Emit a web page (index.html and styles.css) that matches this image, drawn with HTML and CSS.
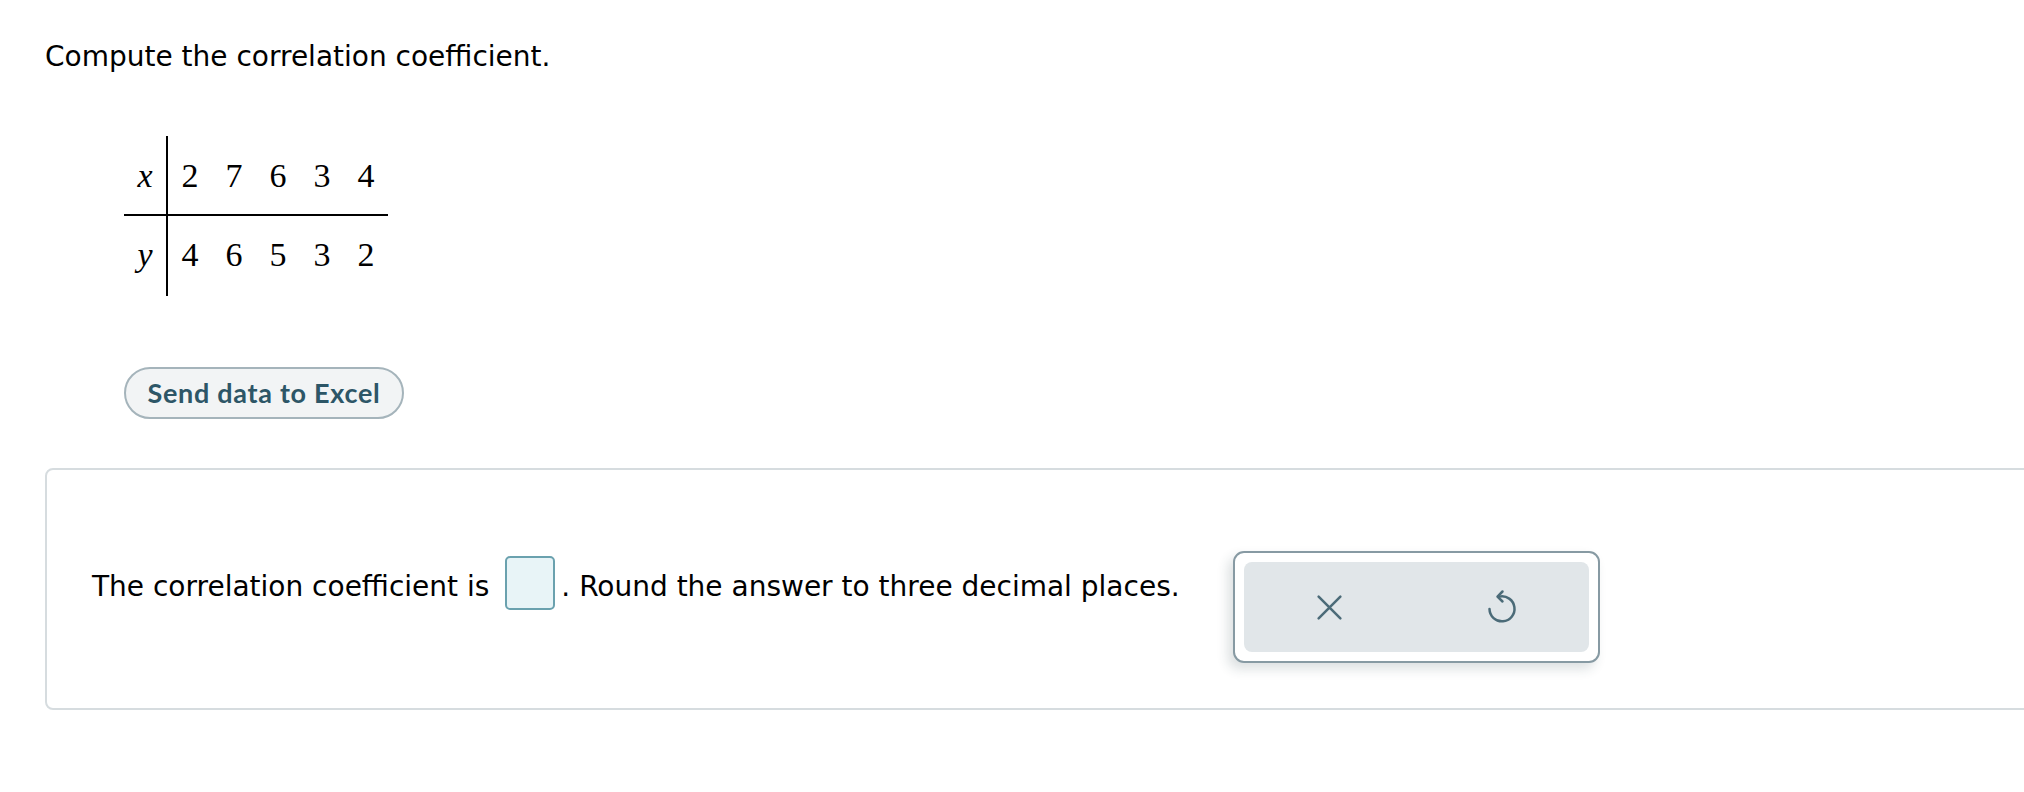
FILE: index.html
```html
<!DOCTYPE html>
<html>
<head>
<meta charset="utf-8">
<title>Correlation coefficient</title>
<link rel="stylesheet" href="styles.css">
</head>
<body>
<div class="page">
  <p class="title">Compute the correlation coefficient.</p>

  <div class="dtable">
    <div class="cell head r1">x</div>
    <div class="cell r1">2</div>
    <div class="cell r1">7</div>
    <div class="cell r1">6</div>
    <div class="cell r1">3</div>
    <div class="cell r1">4</div>
    <div class="cell head r2">y</div>
    <div class="cell r2">4</div>
    <div class="cell r2">6</div>
    <div class="cell r2">5</div>
    <div class="cell r2">3</div>
    <div class="cell r2">2</div>
  </div>

  <button class="excel">Send data to Excel</button>

  <div class="answer">
    <div class="row">
      <div class="question">
        <span class="qtext">The correlation coefficient is</span>
        <span class="input"></span>
        <span class="qtext">. Round the answer to three decimal places.</span>
      </div>
      <div class="tools">
        <div class="tools-inner">
          <div class="tool">
            <svg width="29" height="29" viewBox="0 0 24 24"><path d="M3 3 L21 21 M21 3 L3 21" fill="none" stroke="#4b6b78" stroke-width="2.1" stroke-linecap="round"/></svg>
          </div>
          <div class="tool">
            <svg width="32" height="36" viewBox="0 0 32 36"><path d="M13.5 7.6 A12.5 12.5 0 1 1 3.5 20" fill="none" stroke="#4b6b78" stroke-width="2.5" stroke-linecap="round"/><path d="M16.5 2.5 L11.5 7.6 L16.5 12.5" fill="none" stroke="#4b6b78" stroke-width="2.5" stroke-linecap="round" stroke-linejoin="round"/></svg>
          </div>
        </div>
      </div>
    </div>
  </div>
</div>
</body>
</html>
```

FILE: styles.css
```css
html, body {
  margin: 0;
  padding: 0;
  background: #ffffff;
}
body {
  font-family: "DejaVu Sans", Verdana, sans-serif;
  color: #000000;
}
.page {
  padding-left: 45px;
  overflow: hidden;
  height: 792px;
  box-sizing: border-box;
}
.title {
  margin: 0;
  padding-top: 40px;
  font-size: 28px;
  line-height: 33px;
}
.dtable {
  margin-top: 63px;
  margin-left: 79px;
  display: grid;
  grid-template-columns: repeat(6, 44px);
  grid-template-rows: 80px 80px;
  width: 264px;
  font-family: "Liberation Serif", "Times New Roman", serif;
  font-size: 34px;
  line-height: 38px;
}
.cell {
  box-sizing: border-box;
  text-align: center;
}
.cell.head {
  font-style: italic;
  border-right: 2px solid #000;
}
.cell.r1 {
  border-bottom: 2px solid #000;
  padding-top: 21px;
}
.cell.r2 {
  padding-top: 20px;
}
.excel {
  display: block;
  margin: 71px 0 0 79px;
  height: 52px;
  width: 280px;
  padding: 0;
  box-sizing: border-box;
  border: 2px solid #a5b4bb;
  border-radius: 26px;
  background: #f2f4f5;
  color: #2d5667;
  font-family: Lato, "Open Sans", sans-serif;
  font-weight: 700;
  font-size: 27px;
  letter-spacing: 0.7px;
  line-height: 46px;
  text-align: center;
}
.answer {
  margin-top: 49px;
  margin-right: -120px;
  border: 2px solid #d6dcdf;
  border-radius: 8px;
  height: 242px;
  box-sizing: border-box;
  padding: 81px 0 0 45px;
}
.row {
  display: flex;
  align-items: flex-start;
}
.question {
  display: flex;
  align-items: center;
  margin-top: 5px;
  font-size: 28px;
  line-height: 33px;
  white-space: nowrap;
}
.qtext {
  padding-top: 7px;
}
.input {
  display: inline-block;
  width: 50px;
  height: 54px;
  box-sizing: border-box;
  border: 2px solid #6aa1ae;
  border-radius: 5px;
  background: #e8f4f7;
  margin: 0 6px 0 16px;
}
.tools {
  margin-left: 53px;
  width: 367px;
  height: 112px;
  box-sizing: border-box;
  border: 2px solid #879aa3;
  border-radius: 11px;
  padding: 9px;
  background: #ffffff;
  box-shadow: -5px 6px 12px rgba(40, 60, 70, 0.16);
}
.tools-inner {
  display: flex;
  height: 100%;
  background: #e1e6e9;
  border-radius: 8px;
}
.tool {
  flex: 1;
  display: flex;
  align-items: center;
  justify-content: center;
}
```
